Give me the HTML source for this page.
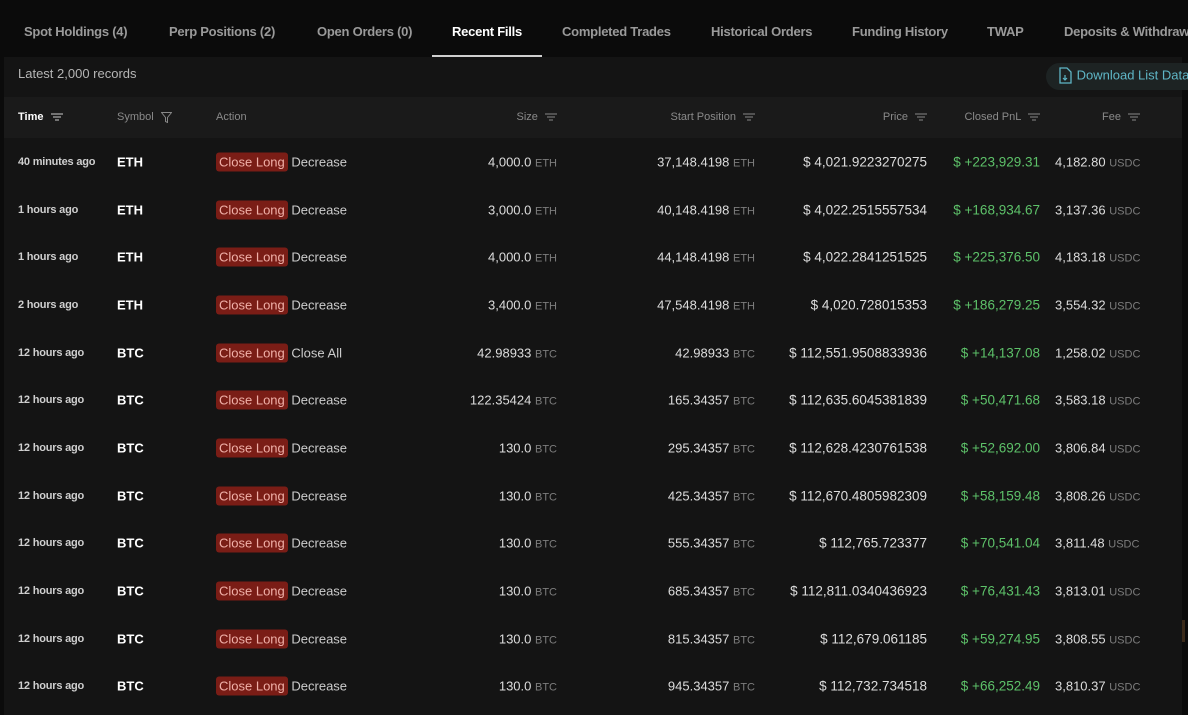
<!DOCTYPE html>
<html><head><style>
body{margin:0;width:1188px;height:715px;background:#0b0b0b;font-family:"Liberation Sans",sans-serif;overflow:hidden;position:relative;color:#e6e6e6}
.tab{position:absolute;top:24px;font-size:13px;font-weight:bold;color:#9a9a9a;white-space:nowrap;letter-spacing:-0.25px}
.panel{position:absolute;left:4px;top:57px;width:1178px;height:658px;background:#141414}
.hdr{position:absolute;left:4px;top:97px;width:1178px;height:41px;background:#1a1a1a}
.h{position:absolute;top:111px;font-size:11px;color:#8a8a8a;white-space:nowrap}
.r{position:absolute;font-size:13px;white-space:nowrap;transform:translateY(-50%)}
.u{color:#7d7d7d;font-size:11px}
.tag{background:#7a1d16;color:#f0b0a8;border-radius:3px;padding:2px 3px}
.g{color:#5dc169}
.ic{display:inline-block;vertical-align:middle;margin-left:4px}
</style></head><body>
<div class="tab" style="left:24px">Spot Holdings (4)</div>
<div class="tab" style="left:169px">Perp Positions (2)</div>
<div class="tab" style="left:317px">Open Orders (0)</div>
<div class="tab" style="left:452px;color:#fff">Recent Fills</div>
<div class="tab" style="left:562px">Completed Trades</div>
<div class="tab" style="left:711px">Historical Orders</div>
<div class="tab" style="left:852px">Funding History</div>
<div class="tab" style="left:987px">TWAP</div>
<div class="tab" style="left:1064px">Deposits &amp; Withdrawals</div>
<div class="panel"></div>
<div style="position:absolute;left:432px;top:55px;width:110px;height:2px;background:#cfcfcf"></div>
<div style="position:absolute;left:18px;top:66px;font-size:13px;color:#b5b5b5">Latest 2,000 records</div>
<div style="position:absolute;left:1046px;top:63px;width:160px;height:27px;border-radius:14px;background:#1d2323"></div>
<div style="position:absolute;left:1057px;top:67px;font-size:13px;color:#5fb6c6;white-space:nowrap"><svg width="16" height="18" viewBox="0 0 16 18" style="vertical-align:middle"><path d="M3 1h7l4 4v11H3z" fill="none" stroke="#5fb6c6" stroke-width="1.3"/><path d="M8 8v5M6 11l2 2 2-2" fill="none" stroke="#5fb6c6" stroke-width="1.2"/></svg> Download List Data</div>
<div class="hdr"></div>
<div class="h" style="left:18px;color:#fff;font-weight:bold">Time <svg class="ic" width="12" height="8"><path d="M0 1h12M2 4h8M4 7h4" stroke="#ccc"/></svg></div>
<div class="h" style="left:117px">Symbol <svg class="ic" width="11" height="11"><path d="M0.5 0.5h10l-4 5v5l-2-1v-4z" fill="none" stroke="#888"/></svg></div>
<div class="h" style="left:216px">Action</div>
<div class="h" style="right:631px">Size <svg class="ic" width="12" height="8"><path d="M0 1h12M2 4h8M4 7h4" stroke="#888"/></svg></div>
<div class="h" style="right:433px">Start Position <svg class="ic" width="12" height="8"><path d="M0 1h12M2 4h8M4 7h4" stroke="#888"/></svg></div>
<div class="h" style="right:261px">Price <svg class="ic" width="12" height="8"><path d="M0 1h12M2 4h8M4 7h4" stroke="#888"/></svg></div>
<div class="h" style="right:148px">Closed PnL <svg class="ic" width="12" height="8"><path d="M0 1h12M2 4h8M4 7h4" stroke="#888"/></svg></div>
<div class="h" style="right:48px">Fee <svg class="ic" width="12" height="8"><path d="M0 1h12M2 4h8M4 7h4" stroke="#888"/></svg></div>
<div id="rows"></div>
<div style="position:absolute;left:1182px;top:620px;width:3px;height:22px;background:#3a2a1a"></div>
<script>
var d=[["40 minutes ago","ETH","Decrease","4,000.0","37,148.4198","4,021.9223270275","+223,929.31","4,182.80"],
["1 hours ago","ETH","Decrease","3,000.0","40,148.4198","4,022.2515557534","+168,934.67","3,137.36"],
["1 hours ago","ETH","Decrease","4,000.0","44,148.4198","4,022.2841251525","+225,376.50","4,183.18"],
["2 hours ago","ETH","Decrease","3,400.0","47,548.4198","4,020.728015353","+186,279.25","3,554.32"],
["12 hours ago","BTC","Close All","42.98933","42.98933","112,551.9508833936","+14,137.08","1,258.02"],
["12 hours ago","BTC","Decrease","122.35424","165.34357","112,635.6045381839","+50,471.68","3,583.18"],
["12 hours ago","BTC","Decrease","130.0","295.34357","112,628.4230761538","+52,692.00","3,806.84"],
["12 hours ago","BTC","Decrease","130.0","425.34357","112,670.4805982309","+58,159.48","3,808.26"],
["12 hours ago","BTC","Decrease","130.0","555.34357","112,765.723377","+70,541.04","3,811.48"],
["12 hours ago","BTC","Decrease","130.0","685.34357","112,811.0340436923","+76,431.43","3,813.01"],
["12 hours ago","BTC","Decrease","130.0","815.34357","112,679.061185","+59,274.95","3,808.55"],
["12 hours ago","BTC","Decrease","130.0","945.34357","112,732.734518","+66,252.49","3,810.37"]];
var h="";d.forEach(function(r,i){var y=162+i*47.65;
h+='<div class="r" style="top:'+y+'px;left:18px;font-size:11px;font-weight:bold;color:#cfcfcf;letter-spacing:-0.2px">'+r[0]+'</div>';
h+='<div class="r" style="top:'+y+'px;left:117px;font-weight:bold;color:#fff">'+r[1]+'</div>';
h+='<div class="r" style="top:'+y+'px;left:216px;color:#ccc"><span class="tag">Close Long</span> '+r[2]+'</div>';
h+='<div class="r" style="top:'+y+'px;right:631px;color:#ddd">'+r[3]+' <span class="u">'+r[1]+'</span></div>';
h+='<div class="r" style="top:'+y+'px;right:433px;color:#ddd">'+r[4]+' <span class="u">'+r[1]+'</span></div>';
h+='<div class="r" style="top:'+y+'px;right:261px;color:#ddd;font-size:13.5px">$ '+r[5]+'</div>';
h+='<div class="r g" style="top:'+y+'px;right:148px;font-size:13.5px">$ '+r[6]+'</div>';
h+='<div class="r" style="top:'+y+'px;left:1055px;color:#ddd">'+r[7]+' <span class="u">USDC</span></div>';});
document.getElementById("rows").innerHTML=h;
</script>
</body></html>
